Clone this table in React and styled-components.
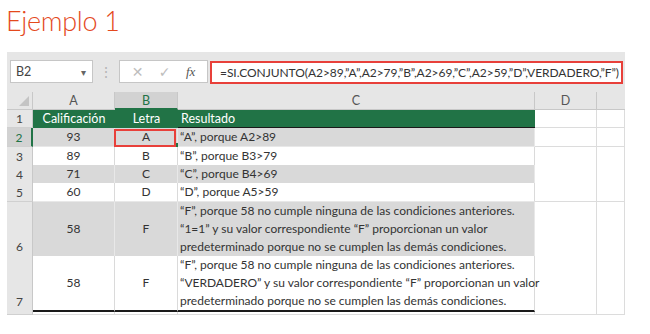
import React from 'react'
import styled, { createGlobalStyle, css } from 'styled-components'

const GlobalStyle = createGlobalStyle`
  html, body {
    margin: 0;
    padding: 0;
    background: #ffffff;
  }
  body {
    font-family: Lato, "Open Sans", sans-serif;
  }
`

const GREEN = '#217346'
const COLS = '26px 82px 63px 357px 62px 28px'

const rows = [
  { n: 2, h: 19, a: '93', b: 'A', c: ['“A”, porque A2>89'], stripe: true, selected: true },
  { n: 3, h: 18, a: '89', b: 'B', c: ['“B”, porque B3>79'] },
  { n: 4, h: 18, a: '71', b: 'C', c: ['“C”, porque B4>69'], stripe: true },
  { n: 5, h: 19, a: '60', b: 'D', c: ['“D”, porque A5>59'] },
  {
    n: 6, h: 54, a: '58', b: 'F', stripe: true,
    c: [
      '“F”, porque 58 no cumple ninguna de las condiciones anteriores.',
      '“1=1” y su valor correspondiente “F” proporcionan un valor',
      'predeterminado porque no se cumplen las demás condiciones.',
    ],
  },
  {
    n: 7, h: 54, a: '58', b: 'F', last: true,
    c: [
      '“F”, porque 58 no cumple ninguna de las condiciones anteriores.',
      '“VERDADERO” y su valor correspondiente “F” proporcionan un valor',
      'predeterminado porque no se cumplen las demás condiciones.',
    ],
  },
]

const App = () => {
  return (
    <Page>
      <GlobalStyle />
      <Title>Ejemplo 1</Title>
      <Sheet>
        <Toolbar>
          <NameBox>
            <span>B2</span>
            <Caret>▾</Caret>
          </NameBox>
          <Grip>⋮</Grip>
          <FormulaButtons>
            <Btn>✕</Btn>
            <Btn>✓</Btn>
            <Fx>fx</Fx>
          </FormulaButtons>
          <FormulaBox>
            =SI.CONJUNTO(A2&gt;89,”A”,A2&gt;79,”B”,A2&gt;69,”C”,A2&gt;59,”D”,VERDADERO,”F”)
          </FormulaBox>
        </Toolbar>

        <HeaderRow>
          <Corner>
            <svg width="10" height="10" viewBox="0 0 10 10">
              <polygon points="10,0 10,10 0,10" fill="#c4c4c4" />
            </svg>
          </Corner>
          <ColHead>A</ColHead>
          <ColHead $active>B</ColHead>
          <ColHead>C</ColHead>
          <ColHead>D</ColHead>
          <ColHead $blank />
        </HeaderRow>

        <Row $h={18}>
          <RowNum>1</RowNum>
          <TableHead $center>Calificación</TableHead>
          <TableHead $center>Letra</TableHead>
          <TableHead $rule>Resultado</TableHead>
          <Empty />
          <Empty />
        </Row>

        {rows.map((r) => (
          <Row key={r.n} $h={r.h}>
            <RowNum $active={r.selected} $tall={r.h > 30}>{r.n}</RowNum>
            <Cell $center $stripe={r.stripe} $last={r.last}>{r.a}</Cell>
            <Cell $center $stripe={r.stripe} $last={r.last}>
              {r.b}
              {r.selected && <Selection><Handle /></Selection>}
            </Cell>
            <Cell $stripe={r.stripe} $last={r.last}>
              {r.c.map((line) => (
                <Line key={line}>{line}</Line>
              ))}
            </Cell>
            <Empty />
            <Empty />
          </Row>
        ))}

        <Row $h={5}>
          <RowNum />
          <Empty />
          <Empty />
          <Empty />
          <Empty />
          <Empty />
        </Row>
      </Sheet>
    </Page>
  )
}

const Page = styled.div`
  width: 650px;
  height: 334px;
  overflow: hidden;
  background: #fff;
`

const Title = styled.h1`
  margin: 0;
  height: 52px;
  padding: 0 0 0 6px;
  box-sizing: border-box;
  font-family: Lato, "Open Sans", sans-serif;
  font-weight: 300;
  font-size: 27px;
  letter-spacing: -0.3px;
  line-height: 42px;
  color: #e4491d;
`

const Sheet = styled.div`
  margin-left: 7px;
  width: 618px;
  background: #e6e6e6;
  font-family: Lato, "Open Sans", sans-serif;
  font-size: 12px;
  color: #333;
`

const Toolbar = styled.div`
  height: 40px;
  display: flex;
  align-items: flex-start;
  padding: 8px 0 0 3px;
  box-sizing: border-box;
`

const NameBox = styled.div`
  width: 83px;
  height: 23px;
  box-sizing: border-box;
  background: #fff;
  border: 1px solid #c6c6c6;
  display: flex;
  align-items: center;
  justify-content: space-between;
  padding: 0 6px 0 5px;
  color: #444;
  font-size: 12.5px;
`

const Caret = styled.span`
  font-size: 10px;
  color: #666;
`

const Grip = styled.div`
  width: 26px;
  height: 23px;
  display: flex;
  align-items: center;
  justify-content: center;
  color: #b5b5b5;
  font-size: 14px;
`

const FormulaButtons = styled.div`
  width: 89px;
  height: 23px;
  box-sizing: border-box;
  background: #fff;
  border: 1px solid #c6c6c6;
  display: flex;
  align-items: center;
  justify-content: space-around;
  padding: 0 4px;
`

const Btn = styled.span`
  color: #bdbdbd;
  font-size: 14px;
  font-family: "DejaVu Sans", sans-serif;
`

const Fx = styled.span`
  font-family: "Liberation Serif", serif;
  font-style: italic;
  font-size: 13px;
  color: #555;
`

const FormulaBox = styled.div`
  margin-left: 2px;
  margin-top: 1px;
  width: 413px;
  height: 23px;
  box-sizing: border-box;
  background: #fff;
  border: 2px solid #e8403a;
  display: flex;
  align-items: center;
  padding-left: 8px;
  font-size: 12px;
  letter-spacing: -0.05px;
  color: #333;
  white-space: nowrap;
  overflow: hidden;
`

const HeaderRow = styled.div`
  display: grid;
  grid-template-columns: ${COLS};
  height: 18px;
`

const Corner = styled.div`
  display: flex;
  align-items: flex-end;
  justify-content: flex-end;
  padding: 0 3px 3px 0;
  border-right: 1px solid #c8c8c8;
  border-bottom: 1px solid #c8c8c8;
`

const ColHead = styled.div`
  display: flex;
  align-items: center;
  justify-content: center;
  font-size: 12.5px;
  color: #555;
  border-right: 1px solid #c8c8c8;
  border-bottom: 1px solid #c8c8c8;
  ${(p) => p.$active && css`
    background: #d2d2d2;
    color: ${GREEN};
    border-bottom: 2px solid ${GREEN};
  `}
  ${(p) => p.$blank && css`
    border-right: none;
  `}
`

const Row = styled.div`
  display: grid;
  grid-template-columns: ${COLS};
  height: ${(p) => p.$h}px;
`

const RowNum = styled.div`
  display: flex;
  justify-content: center;
  align-items: ${(p) => (p.$tall ? 'flex-end' : 'center')};
  padding-bottom: ${(p) => (p.$tall ? '2px' : '0')};
  box-sizing: border-box;
  font-size: 12px;
  color: #444;
  background: #e6e6e6;
  border-right: 1px solid #c8c8c8;
  border-bottom: 1px solid #d0d0d0;
  ${(p) => p.$active && css`
    background: #d2d2d2;
    color: ${GREEN};
    border-right: 2px solid ${GREEN};
  `}
`

const TableHead = styled.div`
  background: ${GREEN};
  color: #fff;
  display: flex;
  align-items: center;
  justify-content: ${(p) => (p.$center ? 'center' : 'flex-start')};
  padding-left: ${(p) => (p.$center ? '0' : '3px')};
  font-size: 12.5px;
  border-bottom: 1px solid ${(p) => (p.$rule ? '#1a1a1a' : GREEN)};
  box-sizing: border-box;
`

const Cell = styled.div`
  position: relative;
  display: flex;
  flex-direction: column;
  justify-content: center;
  align-items: ${(p) => (p.$center ? 'center' : 'flex-start')};
  padding-left: ${(p) => (p.$center ? '0' : '2px')};
  box-sizing: border-box;
  background: ${(p) => (p.$stripe ? '#d9d9d9' : '#fff')};
  border-right: 1px solid ${(p) => (p.$stripe ? '#e8e8e8' : '#dadada')};
  border-bottom: ${(p) => (p.$last ? '2px solid #1a1a1a' : '1px solid #e8e8e8')};
  white-space: nowrap;
  line-height: 18px;
`

const Line = styled.div`
  height: 18px;
`

const Empty = styled.div`
  background: #fff;
  border-right: 1px solid #dcdcdc;
  border-bottom: 1px solid #dcdcdc;
`

const Selection = styled.div`
  position: absolute;
  left: -1px;
  top: 1px;
  right: 1px;
  bottom: -1px;
  border: 2px solid #e8403a;
`

const Handle = styled.div`
  position: absolute;
  right: -6px;
  bottom: -2px;
  width: 4px;
  height: 4px;
  background: ${GREEN};
`

export default App
